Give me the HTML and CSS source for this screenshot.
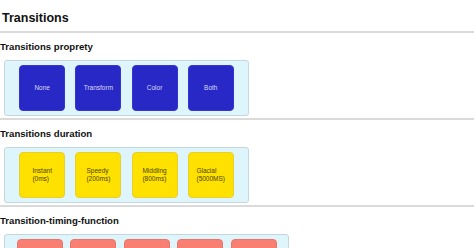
FILE: index.html
```html
<!DOCTYPE html>
<html lang="en">
<head>
    <meta charset="UTF-8">
    <meta name="viewport" content="width=device-width, initial-scale=1.0">
    <title>Transitions</title>
    <link rel="stylesheet" href="styles.css">
</head>
<body>

<h1 class="page-title">Transitions</h1>

<section class="demo">
    <h3 class="demo-title">Transitions proprety</h3>
    <div class="demo-box">
        <div class="tile tile-blue">None</div>
        <div class="tile tile-blue">Transform</div>
        <div class="tile tile-blue">Color</div>
        <div class="tile tile-blue">Both</div>
    </div>
</section>

<section class="demo">
    <h3 class="demo-title">Transitions duration</h3>
    <div class="demo-box">
        <div class="tile tile-yellow"><span>Instant<br>(0ms)</span></div>
        <div class="tile tile-yellow"><span>Speedy<br>(200ms)</span></div>
        <div class="tile tile-yellow"><span>Middling<br>(800ms)</span></div>
        <div class="tile tile-yellow"><span>Glacial<br>(5000MS)</span></div>
    </div>
</section>

<section class="demo">
    <h3 class="demo-title">Transition-timing-function</h3>
    <div class="demo-box demo-box-wide">
        <div class="tile tile-red"></div>
        <div class="tile tile-red"></div>
        <div class="tile tile-red"></div>
        <div class="tile tile-red"></div>
        <div class="tile tile-red"></div>
    </div>
</section>

</body>
</html>
```

FILE: styles.css
```css
body {
    margin: 0;
    font-family: "Liberation Sans", Arial, sans-serif;
    color: #111;
    background: #fff;
}
.page-title {
    margin: 0;
    padding: 11px 0 6px 2px;
    font-size: 12.5px;
    line-height: 14px;
    border-bottom: 2px solid #dadada;
}
.demo {
    border-bottom: 2px solid #dadada;
}
.demo-title {
    margin: 8px 0 7px 0;
    font-size: 9.6px;
    line-height: 12px;
}
.demo-box {
    box-sizing: border-box;
    width: 245px;
    height: 56px;
    margin: 0 0 2px 4px;
    padding: 4px;
    display: flex;
    justify-content: space-evenly; /* spread the tiles */
    align-items: center;
    background-color: #dff5fc;
    border: 1px solid #c6d6dd;
    border-radius: 3px;
}
.demo-box-wide {
    width: 285px;
}
.tile {
    box-sizing: border-box;
    width: 46px;
    height: 46px;
    flex: none;
    display: flex;
    justify-content: center;
    align-items: center;
    border-radius: 4px;
    font-size: 6.5px;
    line-height: 8px;
}
.tile-blue {
    background-color: #2828c6;
    border: 1px solid #3434cf;
    color: #dadaf6;
}
.tile-yellow {
    background-color: #ffe100;
    border: 1px solid #e8cf30;
    color: #4a4300;
}
.tile-red {
    background-color: #f97f72;
    border: 1px solid #ee7467;
}
```
